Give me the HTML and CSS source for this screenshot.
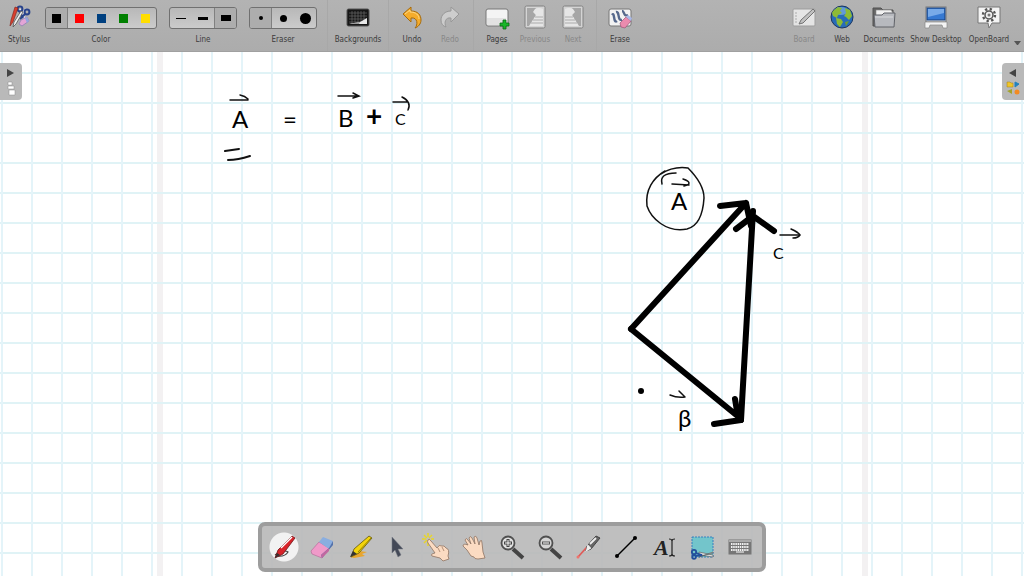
FILE: index.html
```html
<!DOCTYPE html>
<html lang="en">
<head>
    <meta charset="UTF-8">
    <meta name="viewport" content="width=device-width, initial-scale=1.0">
    <title>OpenBoard</title>
    <link rel="stylesheet" href="styles.css">
</head>
<body>
    <header class="toolbar">
        <button class="tool">
            <svg class="icon" viewBox="0 0 24 24">
                <path d="M11 13L19 4M13 4l5 10" stroke="#dfe4ee" stroke-width="2"/>
                <circle cx="13" cy="4" r="2.4" fill="none" stroke="#27428c" stroke-width="2"/>
                <circle cx="20" cy="7" r="2.4" fill="none" stroke="#27428c" stroke-width="2"/>
                <path d="M13 7l3 6M18 9l-5 5" stroke="#27428c" stroke-width="2"/>
                <path d="M8 2l3 1-5 14-3 4 1-6z" fill="#d8402f" stroke="#7d2018" stroke-width=".6"/>
                <path d="M14 6l2 1-7 12-3 3 1-5z" fill="#eee" stroke="#555" stroke-width=".8"/>
                <path d="M14 15l6-3 2 4-7 5-3-2z" fill="#e3a5d6" stroke="#8f80b5" stroke-width=".8"/>
                <path d="M18 13l2-1 2 4-2 2z" fill="#8fa6dc"/>
            </svg>
            <span class="tool-label">Stylus</span>
        </button>
        <div class="picker" role="radiogroup" aria-labelledby="color-label">
            <div class="segments">
                <label class="segment"><input type="radio" name="color" aria-label="Black" checked><span class="swatch black"></span></label>
                <label class="segment"><input type="radio" name="color" aria-label="Red"><span class="swatch red"></span></label>
                <label class="segment"><input type="radio" name="color" aria-label="Blue"><span class="swatch blue"></span></label>
                <label class="segment"><input type="radio" name="color" aria-label="Green"><span class="swatch green"></span></label>
                <label class="segment"><input type="radio" name="color" aria-label="Yellow"><span class="swatch yellow"></span></label>
            </div>
            <span class="tool-label" id="color-label">Color</span>
        </div>
        <div class="picker" role="radiogroup" aria-labelledby="line-label">
            <div class="segments">
                <label class="segment"><input type="radio" name="line" aria-label="Thin"><span class="line thin"></span></label>
                <label class="segment"><input type="radio" name="line" aria-label="Medium"><span class="line medium"></span></label>
                <label class="segment"><input type="radio" name="line" aria-label="Thick" checked><span class="line thick"></span></label>
            </div>
            <span class="tool-label" id="line-label">Line</span>
        </div>
        <div class="picker" role="radiogroup" aria-labelledby="eraser-label">
            <div class="segments">
                <label class="segment"><input type="radio" name="eraser" aria-label="Small" checked><span class="dot small"></span></label>
                <label class="segment"><input type="radio" name="eraser" aria-label="Medium"><span class="dot mid"></span></label>
                <label class="segment"><input type="radio" name="eraser" aria-label="Large"><span class="dot large"></span></label>
            </div>
            <span class="tool-label" id="eraser-label">Eraser</span>
        </div>

        <div class="group">
            <button class="tool backgrounds">
                <svg class="icon" viewBox="0 0 24 24">
                    <rect x="1" y="4" width="22" height="17" rx="1.5" fill="#161616" stroke="#555"/>
                    <path d="M3 8h18M3 11h18M3 14h18M3 17h12M6 6v13M9 6v13M12 6v13M15 6v11M18 6v9" stroke="#696969" stroke-width=".7"/>
                    <path d="M3 19l11-2 7-4v6z" fill="#e8e8e8"/>
                    <path d="M3 19l11-2-1 2z" fill="#999"/>
                </svg>
                <span class="tool-label">Backgrounds</span>
            </button>
        </div>
        <div class="group">
            <button class="tool">
                <svg class="icon" viewBox="0 0 24 24">
                    <path d="M3 9l8-7v4c7 0 10 4 10 9 0 4-3 7-6 8 3-3 3-11-4-10v4z" fill="#f5ac2b" stroke="#a56a0b" stroke-linejoin="round"/>
                    <path d="M5 9l5-4v2c6 0 9 3 9 7" fill="none" stroke="#ffd985"/>
                </svg>
                <span class="tool-label">Undo</span>
            </button>
            <button class="tool" disabled>
                <svg class="icon" viewBox="0 0 24 24">
                    <path d="M21 9l-8-7v4c-6 0-10 4-10 9 0 4 2 6 5 7-2-4-1-10 5-9v4z" fill="#d4d4d4" stroke="#929292" stroke-linejoin="round"/>
                </svg>
                <span class="tool-label">Redo</span>
            </button>
        </div>
        <div class="group">
            <button class="tool">
                <svg class="icon" viewBox="0 0 24 24">
                    <rect x="1" y="4" width="22" height="17" rx="2" fill="#f4f4f4" stroke="#777"/>
                    <path d="M2 13h19v7H2z" fill="#e2e2e2"/>
                    <path d="M18 15h3v3h3v3h-3v3h-3v-3h-3v-3h3z" fill="#18b528" stroke="#076b12" stroke-width=".8"/>
                </svg>
                <span class="tool-label">Pages</span>
            </button>
            <button class="tool" disabled>
                <svg class="icon" viewBox="0 0 24 24">
                    <rect x="2" y="1" width="20" height="22" rx="1.5" fill="#ddd" stroke="#777"/>
                    <path d="M4 3h9l-2 4 2 3-6 11H4z" fill="#a4a4a4"/>
                    <path d="M12 4q4-2 8 0v17H6l7-11-3-3z" fill="#f4f4f4"/>
                    <path d="M12 12h8M10 15h10M8 18h12" stroke="#aaa"/>
                </svg>
                <span class="tool-label">Previous</span>
            </button>
            <button class="tool" disabled>
                <svg class="icon" viewBox="0 0 24 24">
                    <rect x="2" y="1" width="20" height="22" rx="1.5" fill="#ddd" stroke="#777"/>
                    <path d="M20 3h-9l2 4-2 3 6 11h3z" fill="#a4a4a4"/>
                    <path d="M12 4q-4-2-8 0v17h14l-7-11 3-3z" fill="#f4f4f4"/>
                    <path d="M12 12H4M14 15H4M16 18H4" stroke="#aaa"/>
                </svg>
                <span class="tool-label">Next</span>
            </button>
        </div>
        <div class="group">
            <button class="tool">
                <svg class="icon" viewBox="0 0 24 24">
                    <rect x="1" y="4" width="22" height="17" rx="2" fill="#f2f2f2" stroke="#777"/>
                    <path d="M4 10c3-4 1 9 5 6M8 7c4-1 1 9 6 8M14 6c3 0 1 6 6 4" fill="none" stroke="#56688c" stroke-width="2.4"/>
                    <path d="M12 18l6-6 5 4-6 7-4-1z" fill="#eb8bae" stroke="#9d5377" stroke-width=".7"/>
                    <path d="M18 12l2-2 4 3-1 3z" fill="#a9b8e6"/>
                </svg>
                <span class="tool-label">Erase</span>
            </button>
        </div>

        <nav class="modes">
            <button class="tool" disabled>
                <svg class="icon" viewBox="0 0 24 24">
                    <rect x="1" y="4" width="22" height="17" rx="1" fill="#f2f2f2" stroke="#999"/>
                    <path d="M4 7v11" stroke="#aaa" stroke-dasharray="2 1"/>
                    <path d="M21 4l2 2-12 12-4 1 2-4z" fill="#c4c4c4" stroke="#666"/>
                </svg>
                <span class="tool-label">Board</span>
            </button>
            <button class="tool">
                <svg class="icon" viewBox="0 0 24 24">
                    <circle cx="12" cy="12" r="11" fill="#286cb8" stroke="#1c355e"/>
                    <ellipse cx="11" cy="6" rx="7" ry="4" fill="#8ab9e8" opacity=".6"/>
                    <path d="M3 6l5-4 4 1-2 3 2 2-4 2-1 3-4-2-1-3zM6 13l5 1 2 3-3 5-3-3zM15 3l5 2 2 6-3 4-3-3-2-1 2-3z" fill="#8dbb35"/>
                    <path d="M15 17l4-1-3 5z" fill="#6f9f2e"/>
                </svg>
                <span class="tool-label">Web</span>
            </button>
            <button class="tool documents">
                <svg class="icon" viewBox="0 0 24 24">
                    <path d="M1 3h8l2 2h10v16H1z" fill="#666" stroke="#505050"/>
                    <path d="M4 5h15l2 3v5H4z" fill="#f1f1f1" stroke="#888" stroke-width=".6"/>
                    <path d="M2 10h8l2-2h11l-1 14H3z" fill="#b7b9be" stroke="#606268"/>
                    <path d="M3 12h18" stroke="#d8d9dc"/>
                </svg>
                <span class="tool-label">Documents</span>
            </button>
            <button class="tool desktop">
                <svg class="icon" viewBox="0 0 24 24">
                    <rect x="2" y="2" width="20" height="15" fill="#e8e8e8" stroke="#777"/>
                    <rect x="3" y="3" width="18" height="12" fill="#3679d2" stroke="#173e7b"/>
                    <path d="M4 4h16v4L4 12z" fill="#78aae8"/>
                    <path d="M1 17h22v6h-4l-1-3H6l-1 3H1z" fill="#f4f4f4" stroke="#888" stroke-width=".7"/>
                </svg>
                <span class="tool-label">Show Desktop</span>
            </button>
            <button class="tool openboard">
                <svg class="icon" viewBox="0 0 24 24">
                    <path d="M1 2h22v16h-8l-3 5-1-5H1z" fill="#f4f4f4" stroke="#777"/>
                    <circle cx="12" cy="10" r="6" fill="none" stroke="#555" stroke-width="2.4" stroke-dasharray="2.3 2.4"/>
                    <circle cx="12" cy="10" r="4" fill="#eee" stroke="#555" stroke-width="1.5"/>
                    <circle cx="12" cy="10" r="1.5" fill="#777"/>
                </svg>
                <span class="tool-label">OpenBoard</span>
            </button>
            <button class="more" aria-label="More"></button>
        </nav>
    </header>

    <main class="board">
        <svg class="ink" viewBox="0 52 1024 524" preserveAspectRatio="xMinYMin meet">
            <!-- equation -->
            <g class="pen">
                <path d="M230 100h18M240 95q5 1 8 4"/>
                <path d="M338 96h20M353 93l6 3-6 2"/>
                <path d="M393 102h15M402 97q10 5 6 13"/>
                <path d="M225 151l14-2M228 160q10 0 22-4" stroke-width="2"/>
            </g>
            <text class="letter" x="232" y="128">A</text>
            <text class="letter" x="283" y="128">=</text>
            <text class="letter" x="338" y="127">B</text>
            <text class="letter plus" x="366" y="126">+</text>
            <text class="letter small-letter" x="395" y="125">C</text>

            <!-- vector triangle -->
            <g class="marker">
                <path d="M631 329L746 203M720 206l26-3 5 23"/>
                <path d="M631 329l109 89M714 424l27-4M735 399l3 18"/>
                <path d="M741 420l12-209M736 229l17-13 21 15"/>
            </g>

            <!-- vector names -->
            <g class="pen">
                <path d="M661 174Q673 166 688 168C696 176 704 187 704 198C703 214 699 226 687 229C666 233 651 218 647 206C645 190 653 178 665 171"/>
                <path d="M662 184q-3-11 14-11"/>
                <path d="M672 184l17 1M683 179q6 2 6 4t-5 3"/>
                <path d="M780 235h18M791 229q7 3 9 6-2 3-7 3"/>
                <path d="M670 395q7 3 15 2M679 391l6 6"/>
            </g>
            <text class="letter" x="671" y="210">A</text>
            <text class="letter small-letter" x="773" y="259">C</text>
            <text class="letter" x="678" y="427">β</text>
            <circle cx="641" cy="391" r="3"/>
        </svg>

        <button class="side-tab left" aria-label="Show pages">
            <svg class="tab-icon" viewBox="0 0 16 32">
                <path d="M4 3l7 4-7 4z" fill="#444"/>
                <path d="M5 16h4v3H5zM5 20h6v3H5zM6 24h6v5H6z" fill="#fff" stroke="#888" stroke-width=".5"/>
            </svg>
        </button>
        <button class="side-tab right" aria-label="Show library">
            <svg class="tab-icon" viewBox="0 0 16 32">
                <path d="M11 3L4 7l7 4z" fill="#444"/>
                <path d="M2 16h3l1 1h2v4H2z" fill="#efc52b" stroke="#a58212" stroke-width=".5"/>
                <path d="M10 16l4 2-4 3z" fill="#2382bf" stroke="#2382bf"/>
                <path d="M7 23v5l-5-3z" fill="#a3a329"/>
                <circle cx="12" cy="26" r="2.5" fill="#f38b22"/>
            </svg>
        </button>

        <div class="palette" role="toolbar" aria-label="Drawing tools">
            <button class="palette-tool active" aria-label="Pen">
                <svg class="icon" viewBox="0 0 24 24">
                    <path d="M3 20q9-6 13-3-3 5-11 4" fill="none" stroke="#454545" stroke-width="1.2"/>
                    <path d="M20 1l3 2-12 16-8 4 3-8z" fill="#d82229" stroke="#6f1013" stroke-width=".8"/>
                    <path d="M5 18l3 2-5 3z" fill="#333"/>
                    <path d="M9 13L20 2" stroke="#fff" stroke-width="1.5"/>
                </svg>
            </button>
            <button class="palette-tool" aria-label="Eraser">
                <svg class="icon" viewBox="0 0 24 24">
                    <path d="M1 16L9 7l10 6-7 10L2 19z" fill="#f09ac9" stroke="#b66f9b" stroke-width=".7"/>
                    <path d="M9 7l4-5 10 4-4 8z" fill="#8aaee0"/>
                    <path d="M23 6v4L12 23l-1-3 8-7z" fill="#5272ad"/>
                    <path d="M12 23l-1-3 8-7v3z" fill="#c168a0"/>
                </svg>
            </button>
            <button class="palette-tool" aria-label="Highlighter">
                <svg class="icon" viewBox="0 0 24 24">
                    <path d="M2 22l9-6 8 1-5 2 3 2-11 2z" fill="#e8a52d"/>
                    <path d="M21 1l3 2-13 15-8 4 3-8z" fill="#f3d40a" stroke="#61560a" stroke-width=".8"/>
                    <path d="M5 16l4 3-7 3z" fill="#333"/>
                    <path d="M10 17L23 3" stroke="#988500"/>
                </svg>
            </button>
            <button class="palette-tool" aria-label="Select">
                <svg class="icon" viewBox="0 0 24 24">
                    <path d="M6 2l11 12h-5l3 6-3 2-3-7-3 3z" fill="#434957" stroke="#777b84" stroke-width=".5"/>
                </svg>
            </button>
            <button class="palette-tool" aria-label="Interact">
                <svg class="icon hand" viewBox="0 0 28 28">
                    <path d="M6 0v4M6 9v4M0 6h4M9 6h3M2 2l3 3M10 2L7 5M2 10l3-3" stroke="#e8d52a" stroke-width="1.5"/>
                    <path d="M6 7q1-2 3 1l6 7q2-4 5-2 2-1 4 2 4 1 2 8l1 3-6 2-3-3-8-2q-2-2 3-3L6 10q-1-2 0-3z" fill="#fbdbc2" stroke="#8f7462" stroke-width=".8"/>
                    <path d="M16 15l2 4M20 14l2 4" stroke="#b59178"/>
                </svg>
            </button>
            <button class="palette-tool" aria-label="Scroll page">
                <svg class="icon" viewBox="0 0 24 24">
                    <path d="M9 21l-4-6-4-4q0-3 5-1L3 5q1-3 3 0l3 4-2-6q1-3 3 0l3 6-1-7q2-2 3 1l2 7 1-4q2-2 2 2l1 9 2 6-7 1q-4 0-4-2z" fill="#fbdbc2" stroke="#8f7462" stroke-width=".8" stroke-linejoin="round"/>
                </svg>
            </button>
            <button class="palette-tool" aria-label="Zoom in">
                <svg class="icon" viewBox="0 0 24 24">
                    <path d="M13 14l10 9" stroke="#444" stroke-width="4"/>
                    <circle cx="8" cy="8" r="6.5" fill="#e1e1e1" stroke="#505050" stroke-width="1.8"/>
                    <path d="M4 8h8M8 4v8" stroke="#444" stroke-width="3"/>
                    <path d="M5 8h6M8 5v6" stroke="#fff"/>
                </svg>
            </button>
            <button class="palette-tool" aria-label="Zoom out">
                <svg class="icon" viewBox="0 0 24 24">
                    <path d="M13 14l10 9" stroke="#444" stroke-width="4"/>
                    <circle cx="8" cy="8" r="6.5" fill="#d5d5d5" stroke="#505050" stroke-width="1.8"/>
                    <path d="M4 8h8" stroke="#555" stroke-width="3"/>
                    <path d="M5 8h6" stroke="#fff"/>
                </svg>
            </button>
            <button class="palette-tool" aria-label="Laser pointer">
                <svg class="icon" viewBox="0 0 24 24">
                    <path d="M2 22l9-10" stroke="#df5c59" stroke-width="1.8"/>
                    <circle cx="2" cy="22" r="1.5" fill="#ee746d"/>
                    <path d="M20 1l4 2-9 11-5 2 1-5z" fill="#666" stroke="#444"/>
                    <path d="M12 11l2 2-3 2zM14 9l6-6" fill="#eee" stroke="#eee" stroke-width="1.8"/>
                </svg>
            </button>
            <button class="palette-tool" aria-label="Draw line">
                <svg class="icon" viewBox="0 0 24 24">
                    <path d="M3 21L21 3" stroke="#000" stroke-width="1.5"/>
                    <circle cx="3" cy="21" r="2"/><circle cx="21" cy="3" r="2"/>
                </svg>
            </button>
            <button class="palette-tool" aria-label="Write text">
                <svg class="icon" viewBox="0 0 24 24">
                    <text class="text-glyph" x="2" y="20">A</text>
                    <path d="M17 4q3 0 3 2 0-2 3-2M20 6v14M17 21q3 0 3-2 0 2 3 2" fill="none" stroke="#222" stroke-width="1.2"/>
                </svg>
            </button>
            <button class="palette-tool" aria-label="Capture">
                <svg class="icon" viewBox="0 0 24 24">
                    <rect x="2" y="2" width="21" height="20" fill="#73c5cb" stroke="#3680bf" stroke-dasharray="2 1"/>
                    <path d="M9 17l14 3v2l-14-2zM9 22l14-4v-1z" fill="#ddd" stroke="#555" stroke-width=".6"/>
                    <circle cx="4" cy="17" r="2.2" fill="none" stroke="#234f9c" stroke-width="1.8"/>
                    <circle cx="4" cy="22" r="1.8" fill="none" stroke="#234f9c" stroke-width="1.8"/>
                    <path d="M6 18l6 2-7 1" fill="none" stroke="#234f9c" stroke-width="1.8"/>
                </svg>
            </button>
            <button class="palette-tool" aria-label="Virtual keyboard">
                <svg class="icon" viewBox="0 0 24 24">
                    <rect x="1" y="5" width="22" height="14" fill="#777" stroke="#777"/>
                    <path d="M1 6h22" stroke="#ddd"/>
                    <path d="M3 9h18M3 12h18M3 15h18" stroke="#f1f1f1" stroke-width="2" stroke-dasharray="1.5 .7"/>
                    <path d="M8 17h8" stroke="#fff"/>
                </svg>
            </button>
        </div>
    </main>
</body>
</html>
```
FILE: styles.css
```css
* {
    box-sizing: border-box;
}
body {
    margin: 0;
    min-height: 100vh;
    display: flex;
    flex-direction: column;
    font-family: "DejaVu Sans Condensed", "Liberation Sans", sans-serif;
    background: #fff;
}
button {
    border: none;
    background: none;
    padding: 0;
    font-family: inherit;
    color: inherit;
}

/* top toolbar */
.toolbar {
    display: flex;
    align-items: stretch;
    height: 52px;
    background: linear-gradient(#b3b3b3, #acacac);
    border-bottom: 1px solid #a0a0a0;
    color: #3c3c3c;
}
.tool,
.picker {
    display: flex;
    flex-direction: column;
    align-items: center;
    padding-top: 5px;
}
.tool {
    width: 38px;
}
.tool.backgrounds {
    width: 52px;
}
.tool.desktop {
    width: 58px;
}
.tool.documents {
    width: 46px;
}
.tool.openboard {
    width: 48px;
}
.tool:disabled {
    color: #888;
}
.tool:disabled .icon {
    opacity: 0.8;
}
.icon {
    display: block;
    width: 24px;
    height: 24px;
    overflow: visible;
}
.tool-label {
    margin-top: 6px;
    font-size: 8px;
    line-height: 10px;
    white-space: nowrap;
}
.picker {
    margin-left: 7px;
    padding-top: 7px;
}
.picker + .picker {
    margin-left: 12px;
}
.segments {
    display: flex;
    height: 22px;
    border: 1px solid #707070;
    border-radius: 3px;
    background: linear-gradient(#b8b8b8, #cbcbcb);
    overflow: hidden;
}
.segment {
    display: flex;
    align-items: center;
    justify-content: center;
    width: 22px;
}
.segment input {
    position: absolute;
    opacity: 0;
    pointer-events: none;
}
.segment:has(input:checked) {
    background: #adadad;
}
.segment:first-child:has(input:checked) {
    border-right: 1px solid #808080;
}
.segment:last-child:has(input:checked) {
    border-left: 1px solid #808080;
}
.swatch {
    width: 9px;
    height: 9px;
}
.black {
    background: #000;
}
.red {
    background: #f00;
}
.blue {
    background: #004080;
}
.green {
    background: #008000;
}
.yellow {
    background: #ffde00;
}
.line {
    width: 10px;
    background: #000;
}
.thin {
    height: 1px;
}
.medium {
    height: 3px;
}
.thick {
    height: 6px;
}
.dot {
    border-radius: 50%;
    background: #000;
}
.small {
    width: 4px;
    height: 4px;
}
.mid {
    width: 7px;
    height: 7px;
}
.large {
    width: 11px;
    height: 11px;
}
.group {
    display: flex;
    padding: 0 4px;
    border-left: 1px solid #a8a8a8;
}
.picker + .group {
    margin-left: 10px;
}
.modes {
    display: flex;
    margin-left: auto;
}
.more {
    align-self: flex-end;
    width: 7px;
    margin: 0 3px 6px 1px;
    border-top: 4px solid #555;
    border-left: 3px solid transparent;
    border-right: 3px solid transparent;
}

/* squared page */
.board {
    position: relative;
    flex: 1;
    display: flex;
    flex-direction: column;
    overflow: hidden;
    background-color: #fff;
    background-image:
        linear-gradient(90deg, transparent 1px, #e4f4f9 1px, #e4f4f9 3px, transparent 3px),
        linear-gradient(transparent 20px, #e0f3f6 20px, #e0f3f6 22px, transparent 22px),
        linear-gradient(#f3f1f2, #f3f1f2),
        linear-gradient(#f3f1f2, #f3f1f2);
    background-size: 30px 30px, 30px 30px, 6px 100%, 6px 100%;
    background-position: 0 0, 0 0, 157px 0, 862px 0;
    background-repeat: repeat, repeat, no-repeat, no-repeat;
}
.ink {
    position: absolute;
    top: 0;
    left: 0;
    width: 100%;
}
.pen {
    fill: none;
    stroke: #111;
    stroke-width: 1.5;
    stroke-linecap: round;
}
.marker {
    fill: none;
    stroke: #000;
    stroke-width: 6;
    stroke-linecap: round;
    stroke-linejoin: round;
}
.letter {
    font-family: Lato, "Noto Sans", sans-serif;
    font-size: 24px;
    fill: #000;
}
.small-letter {
    font-size: 16px;
}
.plus {
    font-size: 28px;
    font-weight: bold;
}

/* folded side panels */
.side-tab {
    position: absolute;
    top: 11px;
    width: 22px;
    height: 37px;
    display: flex;
    align-items: center;
    justify-content: center;
    background: #b9b9b9;
}
.side-tab.left {
    left: 0;
    border-radius: 0 4px 4px 0;
}
.side-tab.right {
    right: 0;
    border-radius: 4px 0 0 4px;
}
.tab-icon {
    width: 16px;
    height: 32px;
}

/* drawing palette */
.palette {
    position: relative;
    align-self: center;
    display: flex;
    align-items: center;
    gap: 4px;
    height: 50px;
    margin-top: auto;
    margin-bottom: 4px;
    padding: 0 5px;
    border: 4px solid #9d9d9d;
    border-radius: 7px;
    background: rgba(184, 184, 184, 0.9);
}
.palette-tool {
    display: flex;
    align-items: center;
    justify-content: center;
    width: 34px;
    height: 34px;
}
.palette-tool.active {
    border-radius: 50%;
    background: radial-gradient(circle, #f2f2f2 14px, transparent 15px);
}
.icon.hand {
    width: 28px;
    height: 28px;
}
.text-glyph {
    font-family: "Liberation Serif", serif;
    font-size: 22px;
    font-weight: bold;
    font-style: italic;
    fill: #222;
}
```
